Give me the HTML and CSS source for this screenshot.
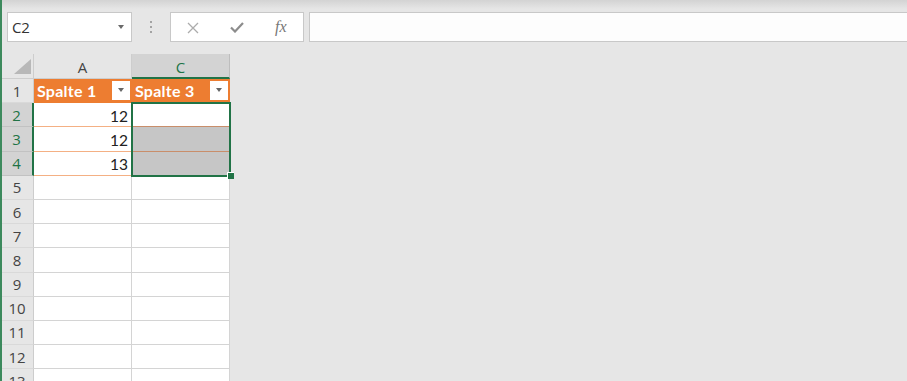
FILE: index.html
```html
<!DOCTYPE html>
<html lang="de">
<head>
<meta charset="utf-8">
<title>Excel Tabelle</title>
<link rel="stylesheet" href="styles.css">
</head>
<body>
<div class="app">
  <div class="edge"></div>
  <div class="main">
    <div class="fbar">
      <div class="namebox"><span class="ref">C2</span><span class="nb-arrow"></span></div>
      <div class="sep"><span></span><span></span><span></span></div>
      <div class="fbtns">
        <svg class="ic-x" width="12" height="12" viewBox="0 0 12 12"><path d="M1 1 L11 11 M11 1 L1 11" stroke="#acacac" stroke-width="1.3" fill="none"/></svg>
        <svg class="ic-check" width="14" height="11" viewBox="0 0 14 11"><path d="M1 5.5 L5 9.5 L13 1" stroke="#8c8c8c" stroke-width="2.2" fill="none"/></svg>
        <span class="fx">fx</span>
      </div>
      <div class="finput"></div>
    </div>
    <div class="sheet">
      <div class="grid">
        <div class="corner"><svg width="17" height="15" viewBox="0 0 17 15"><path d="M17 0 L17 15 L0 15 Z" fill="#b8b8b8"/></svg></div>
        <div class="ch">A</div>
        <div class="ch ch-sel">C</div>

        <div class="rh">1</div>
        <div class="th">Spalte 1<span class="dd"></span></div>
        <div class="th">Spalte 3<span class="dd"></span></div>

        <div class="rh rh-sel">2</div>
        <div class="c num tb">12</div>
        <div class="c tb-sel"></div>

        <div class="rh rh-sel">3</div>
        <div class="c num tb">12</div>
        <div class="c fill tb-sel"></div>

        <div class="rh rh-sel">4</div>
        <div class="c num tb">13</div>
        <div class="c fill"></div>

        <div class="rh">5</div><div class="c"></div><div class="c"></div>
        <div class="rh">6</div><div class="c"></div><div class="c"></div>
        <div class="rh">7</div><div class="c"></div><div class="c"></div>
        <div class="rh">8</div><div class="c"></div><div class="c"></div>
        <div class="rh">9</div><div class="c"></div><div class="c"></div>
        <div class="rh">10</div><div class="c"></div><div class="c"></div>
        <div class="rh">11</div><div class="c"></div><div class="c"></div>
        <div class="rh">12</div><div class="c"></div><div class="c"></div>
        <div class="rh">13</div><div class="c"></div><div class="c"></div>
      </div>
      <div class="selection"></div>
      <div class="handle"></div>
    </div>
  </div>
</div>
</body>
</html>
```
FILE: styles.css
```css
html, body {
  margin: 0;
  padding: 0;
  height: 381px;
  overflow: hidden;
}
body {
  background: #e6e6e6;
  font-family: "Open Sans", "Noto Sans", sans-serif;
  color: #444;
}
.app {
  display: flex;
  height: 381px;
  overflow: hidden;
  background: linear-gradient(#d3d3d3 0, #e6e6e6 9px, #e6e6e6 100%);
}
.edge {
  width: 2px;
  flex: none;
  background: #3d8a5d;
}
.main {
  flex: 1;
  display: flex;
  flex-direction: column;
  min-width: 0;
}
.fbar {
  flex: none;
  display: flex;
  align-items: stretch;
  padding: 12px 0 0 5px;
  height: 30px;
}
.namebox {
  width: 125px;
  box-sizing: border-box;
  border: 1px solid #c8c8c8;
  background: #fff;
  display: flex;
  align-items: center;
  justify-content: space-between;
  padding: 0 7px 0 4px;
}
.ref {
  font-size: 15px;
  color: #333;
  letter-spacing: -0.1px;
}
.nb-arrow {
  width: 0;
  height: 0;
  border-left: 3.5px solid transparent;
  border-right: 3.5px solid transparent;
  border-top: 4px solid #6a6a6a;
}
.sep {
  width: 38px;
  display: flex;
  flex-direction: column;
  align-items: center;
  justify-content: center;
  gap: 2.5px;
}
.sep span {
  width: 2.5px;
  height: 2.5px;
  background: #a3a3a3;
}
.fbtns {
  width: 134px;
  box-sizing: border-box;
  border: 1px solid #c8c8c8;
  background: #fff;
  display: flex;
  align-items: center;
  padding-left: 16px;
  gap: 31px;
}
.ic-x { margin-top: 1px; }
.ic-check { margin-top: 1px; }
.fx {
  font-family: "Liberation Serif", serif;
  font-style: italic;
  font-size: 16px;
  color: #777;
  margin-top: -1px;
}
.finput {
  flex: 1;
  margin-left: 5px;
  margin-right: -2px;
  border: 1px solid #c8c8c8;
  background: #fdfdfd;
}
.sheet {
  flex: none;
  position: relative;
  margin-top: 12px;
}
.grid {
  display: grid;
  grid-template-columns: 32px 98px 98px;
  grid-template-rows: 25px;
  grid-auto-rows: 24.2px;
  width: 228px;
}
.grid > div {
  box-sizing: border-box;
}
.corner {
  background: #e6e6e6;
  border-right: 1px solid #cdcdcd;
  border-bottom: 1px solid #cdcdcd;
  display: flex;
  align-items: flex-end;
  justify-content: flex-end;
  padding: 0 2px 4px 0;
}
.corner svg { display: block; }
.ch {
  background: #e6e6e6;
  border-right: 1px solid #cdcdcd;
  border-bottom: 1px solid #cdcdcd;
  display: flex;
  align-items: center;
  justify-content: center;
  font-size: 15px;
  color: #444;
  padding-top: 2px;
}
.ch-sel {
  background: #d3d3d3;
  color: #217346;
  border-bottom: 2px solid #217346;
  border-right: 1px solid #bdbdbd;
}
.rh {
  background: #e6e6e6;
  border-right: 1px solid #cdcdcd;
  border-bottom: 1px solid #d9d9d9;
  display: flex;
  align-items: center;
  justify-content: center;
  font-size: 15px;
  color: #444;
  padding-right: 1px;
}
.rh-sel {
  background: #d3d3d3;
  color: #217346;
  border-right: 2px solid #217346;
  border-bottom: 1px solid #c2c2c2;
}
.th {
  background: #ed7d31;
  color: #fff;
  font-family: "Lato", "Open Sans", sans-serif;
  font-weight: 700;
  font-size: 16px;
  letter-spacing: 0.25px;
  display: flex;
  align-items: center;
  justify-content: space-between;
  padding: 0 2px 1px 3px;
  border-bottom: 1px solid #ed7d31;
}
.dd {
  width: 18px;
  height: 19px;
  background: #fff;
  display: flex;
  align-items: center;
  justify-content: center;
  position: relative;
}
.dd::after {
  content: "";
  border-left: 3.5px solid transparent;
  border-right: 3.5px solid transparent;
  border-top: 4px solid #666;
}
.c {
  background: #fff;
  border-right: 1px solid #d4d4d4;
  border-bottom: 1px solid #d4d4d4;
}
.num {
  font-family: "Lato", "Open Sans", sans-serif;
  font-size: 15.5px;
  color: #222;
  display: flex;
  align-items: center;
  justify-content: flex-end;
  padding: 2px 3px 0 0;
}
.tb {
  border-bottom: 1px solid #f4b084;
}
.fill {
  background: #c6c6c6;
}
.tb-sel {
  border-bottom: 1px solid #c98e6a;
}
.selection {
  position: absolute;
  left: 129px;
  top: 48px;
  width: 100px;
  height: 75px;
  box-sizing: border-box;
  border: 2px solid #217346;
  pointer-events: none;
}
.handle {
  position: absolute;
  left: 225px;
  top: 118px;
  width: 7px;
  height: 7px;
  box-sizing: border-box;
  background: #217346;
  border-left: 1px solid #fff;
  border-top: 1px solid #fff;
}
```
